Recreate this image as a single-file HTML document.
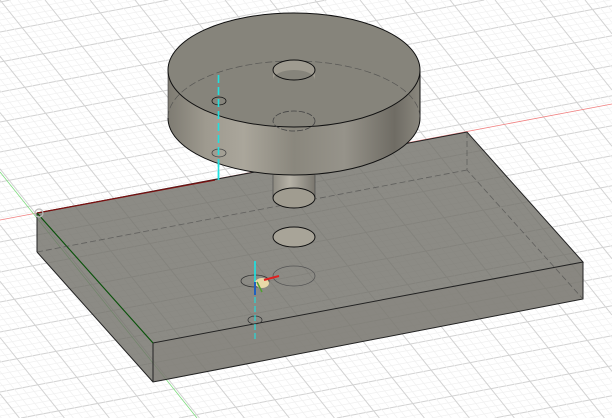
<!DOCTYPE html>
<html><head><style>html,body{margin:0;padding:0;background:#fff;overflow:hidden;width:612px;height:418px}svg{display:block}</style></head>
<body>
<svg id="s" width="612" height="418" viewBox="0 0 612 418" xmlns="http://www.w3.org/2000/svg">
<defs>
<linearGradient id="side" x1="0" x2="1" y1="0" y2="0">
<stop offset="0" stop-color="#7e7b72"/><stop offset="0.15" stop-color="#9e9a8f"/><stop offset="0.3" stop-color="#aaa69b"/><stop offset="0.5" stop-color="#8a877d"/><stop offset="0.7" stop-color="#96938a"/><stop offset="0.9" stop-color="#6f6c64"/><stop offset="1" stop-color="#8a877e"/>
</linearGradient>
<linearGradient id="shaft" x1="0" x2="1"><stop offset="0" stop-color="#8d8a81"/><stop offset="0.4" stop-color="#b5b1a6"/><stop offset="1" stop-color="#7a776f"/></linearGradient>
</defs>
<g id="grid"></g>
<line x1="0" y1="220" x2="612" y2="104" stroke="#f08080" stroke-width="0.8"/>
<line x1="0" y1="172" x2="197" y2="418" stroke="#7fdc7f" stroke-width="0.8"/>
<polygon points="37,213 467,132 583,262 583,299 153,382 37,252" fill="#6f6e66" fill-opacity="0.8"/>
<polygon points="153,343 583,262 583,299 153,382" fill="#85837a" fill-opacity="0.4"/>
<g stroke="#222" stroke-width="1" fill="none">
<polyline points="37,213 467,132 583,262 153,343 37,213"/>
<line x1="37" y1="213" x2="37" y2="252"/>
<polyline points="37,252 153,382 583,299 583,262"/>
<line x1="153" y1="343" x2="153" y2="382"/>
</g>
<line x1="37" y1="213" x2="215" y2="180" stroke="#7a1010" stroke-width="1.2"/>
<line x1="37" y1="213" x2="153" y2="343" stroke="#0a5a0a" stroke-width="1"/>
<g stroke="#444" stroke-width="0.8" fill="none" stroke-dasharray="6,3" opacity="0.6">
<line x1="37" y1="252" x2="467" y2="170"/>
<polyline points="467,132 467,170 583,299"/>
</g>
<ellipse cx="294" cy="237" rx="21" ry="10" fill="#a8a498"/>
<ellipse cx="294" cy="237" rx="21" ry="10" fill="none" stroke="#111" stroke-width="1"/>
<ellipse cx="294" cy="276" rx="21" ry="10" fill="none" stroke="#555" stroke-width="0.8"/>
<ellipse cx="255" cy="281" rx="14" ry="6" fill="none" stroke="#333" stroke-width="0.8"/>
<ellipse cx="255" cy="320" rx="7" ry="4" fill="none" stroke="#333" stroke-width="0.8"/>
<rect x="273" y="170" width="42" height="28" fill="url(#shaft)"/>
<line x1="273" y1="175" x2="273" y2="198" stroke="#444" stroke-width="0.6"/>
<line x1="315" y1="175" x2="315" y2="198" stroke="#444" stroke-width="0.6"/>
<ellipse cx="294" cy="198" rx="21" ry="10" fill="#a09c90" stroke="#111" stroke-width="1"/>
<path d="M168,70 L168,118 A126,57 0 0 0 420,118 L420,70 Z" fill="url(#side)"/>
<path d="M168,118 A126,57 0 0 0 420,118" fill="none" stroke="#111" stroke-width="1"/>
<line x1="168" y1="70" x2="168" y2="118" stroke="#333" stroke-width="0.6"/>
<line x1="420" y1="70" x2="420" y2="118" stroke="#111" stroke-width="1"/>
<ellipse cx="294" cy="70" rx="126" ry="57" fill="#86847b" stroke="#111" stroke-width="1"/>
<path d="M168,118 A126,57 0 0 1 420,118" fill="none" stroke="#444" stroke-width="0.7" stroke-dasharray="7,3" opacity="0.7"/>
<path d="M273,70 A21,10 0 0 1 315,70 L315,80 A21,10 0 0 0 273,80 Z" fill="#9f9b90"/>
<ellipse cx="294" cy="70" rx="21" ry="10" fill="none" stroke="#111" stroke-width="1"/>
<ellipse cx="294" cy="121" rx="21" ry="10" fill="none" stroke="#444" stroke-width="0.8" stroke-dasharray="6,2"/>
<ellipse cx="219" cy="101" rx="7" ry="4" fill="none" stroke="#111" stroke-width="0.8"/>
<ellipse cx="219" cy="153" rx="7" ry="4" fill="none" stroke="#444" stroke-width="0.8"/>
<line x1="218.5" y1="75" x2="218.5" y2="180" stroke="#20e0e0" stroke-width="1.6" stroke-dasharray="8,4"/>
<line x1="218.5" y1="160" x2="218.5" y2="180" stroke="#20e0e0" stroke-width="1.6"/>
<line x1="255" y1="261" x2="255" y2="340" stroke="#20e0e0" stroke-width="1.4" stroke-dasharray="6,3" opacity="0.8"/>
<line x1="255" y1="261" x2="255" y2="282" stroke="#20e0e0" stroke-width="1.6"/>
<ellipse cx="262" cy="283" rx="7" ry="5" fill="#e8d8a8"/>
<line x1="255" y1="282" x2="255" y2="295" stroke="#2060c0" stroke-width="2"/>
<line x1="257" y1="282" x2="262" y2="292" stroke="#50a030" stroke-width="1.5"/>
<line x1="264" y1="280" x2="279" y2="276" stroke="#e02020" stroke-width="2"/>
<circle cx="39" cy="213" r="4" fill="none" stroke="#bbb" stroke-width="1.2"/>
</svg>
<script>
var g=document.getElementById('grid'),ns='http://www.w3.org/2000/svg',W=612,H=418;
function L(x1,y1,x2,y2,c,w){var l=document.createElementNS(ns,'line');l.setAttribute('x1',x1.toFixed(1));l.setAttribute('y1',y1.toFixed(1));l.setAttribute('x2',x2.toFixed(1));l.setAttribute('y2',y2.toFixed(1));l.setAttribute('stroke',c);l.setAttribute('stroke-width',w);g.appendChild(l);}
function clip(x0,y0,dx,dy,c,w){var t0=-1e9,t1=1e9;
 function lim(p,d,lo,hi){if(Math.abs(d)<1e-9){if(p<lo||p>hi){t0=1;t1=0;}return;}var a=(lo-p)/d,b=(hi-p)/d;if(a>b){var t=a;a=b;b=t;}if(a>t0)t0=a;if(b<t1)t1=b;}
 lim(x0,dx,0,W);lim(y0,dy,0,H);if(t1>t0)L(x0+dx*t0,y0+dy*t0,x0+dx*t1,y0+dy*t1,c,w);}
for(var i=-40;i<160;i++){var y=i*6+2;var maj=(i%5==0);clip(0,y,1,-0.19,maj?'#d2d2d2':'#f0f0f0',maj?1:0.7);}
for(var j=-120;j<90;j++){var x=j*9;var maj=(j%5==0);clip(x,0,1,1.25,maj?'#d2d2d2':'#f0f0f0',maj?1:0.7);}
</script>
</body></html>
